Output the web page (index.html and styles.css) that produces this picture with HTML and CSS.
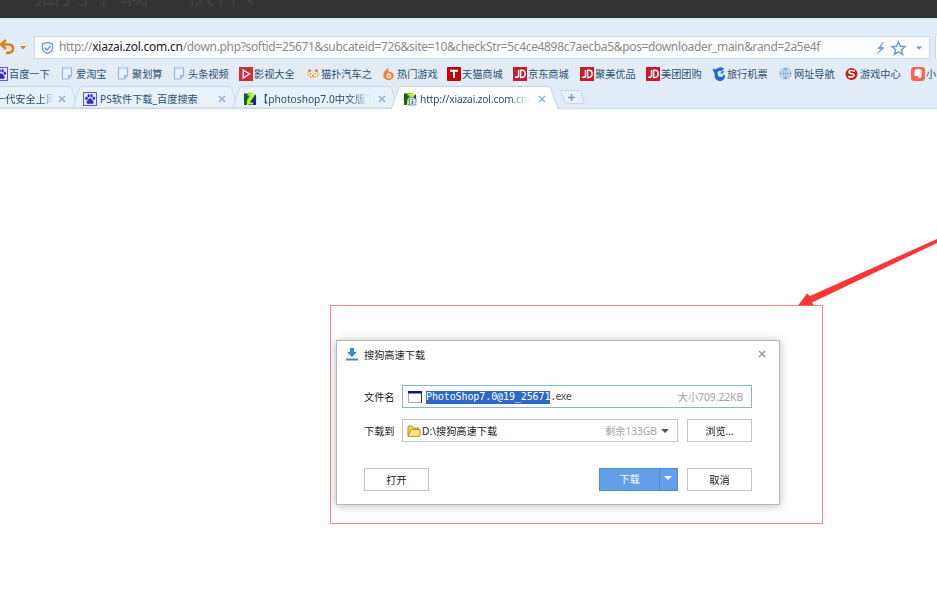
FILE: index.html
```html
<!DOCTYPE html>
<html lang="zh-CN">
<head>
<meta charset="utf-8">
<title>搜狗高速下载</title>
<link rel="stylesheet" href="styles.css">
</head>
<body>
<svg class="defs" width="0" height="0" aria-hidden="true">
  <symbol id="page" viewBox="0 0 14 14"><path d="M1.500 1h9v7.500l-3 3.500h-6zM10.500 8.500h-3v3" fill="#e9f3fd" stroke="#93b8e6" stroke-width="1.200"/></symbol>
  <symbol id="paw" viewBox="0 0 14 14"><rect x=".6" y=".6" width="12.800" height="12.800" fill="#f4f4ff" stroke="#4a48df" stroke-width="1"/><g fill="#2c2ad8"><ellipse cx="3.500" cy="6.300" rx="1.300" ry="1.700"/><ellipse cx="5.700" cy="3.700" rx="1.200" ry="1.700"/><ellipse cx="8.600" cy="3.700" rx="1.200" ry="1.700"/><ellipse cx="10.800" cy="6.300" rx="1.300" ry="1.700"/><path d="M7.100 6.300c1.500 0 2 1.700 3.200 2.800 1 1.200.3 2.900-1.300 2.800-1.300-.2-2.500-.2-3.800 0-1.600.1-2.300-1.600-1.300-2.800C5.100 8 5.600 6.300 7.100 6.300z"/></g></symbol>
  <symbol id="jd" viewBox="0 0 14 14"><rect width="14" height="14" fill="#c71a2c"/><path d="M5.500 3v6q0 1.700-3.500 1.200M7.600 3.200v7.200h1.200q3.300 0 3.300-3.600T8.800 3.200z" fill="none" stroke="#fff" stroke-width="1.500"/></symbol>
  <symbol id="zol" viewBox="0 0 14 14"><circle cx="7" cy="7" r="6.500" fill="#9be321"/><path d="M1 1.500h7L4 8v5H1z" fill="#165d35"/><path d="M13 2v11H5l5-7z" fill="#152b8c"/><path d="M4.500 2.500h5.500L5 11.500h5" fill="none" stroke="#c8f432" stroke-width="1.800"/></symbol>
  <symbol id="close" viewBox="0 0 8 8"><path d="M1 1l6 6M7 1L1 7" stroke="currentColor" stroke-width="1.500"/></symbol>
</svg>

<header class="page-top"><span>猫狗下载</span><span>快件<em>、</em></span></header>

<div class="browser">
  <div class="toolbar">
    <svg class="undo" viewBox="0 0 28 18"><path d="M6 1L1 5.500 6 10M2 5.500h6q5 0 5 4t-5 4.500H6" fill="none" stroke="#dc8113" stroke-width="2.600"/><path d="M20 7h6l-3 3.500z" fill="#dc8113"/></svg>
    <div class="address">
      <svg class="shield" viewBox="0 0 14 14"><path d="M7 1l5.500 1.500v4.500c0 3-2.500 5-5.500 6-3-1-5.500-3-5.500-6V2.500z" fill="#e9f1fa" stroke="#7699c2" stroke-width="1.300"/><path d="M4 6.800l2.300 2.300 4-4.300" fill="none" stroke="#7699c2" stroke-width="1.500"/></svg>
      <span class="url">http://<b>xiazai.zol.com.cn</b>/down.php?softid=25671&amp;subcateid=726&amp;site=10&amp;checkStr=5c4ce4898c7aecba5&amp;pos=downloader_main&amp;rand=2a5e4f</span>
      <svg class="address-tools" viewBox="0 0 52 16"><path d="M8.500 2L3 8.500l3.500.3L2 14l7-6.200-3.600-.4z" fill="#7899c9" stroke="#7899c9" stroke-width=".8"/><path d="M23.500 2l1.800 4.300 4.700.4-3.600 3 1.200 4.600-4.100-2.500-4.100 2.500 1.200-4.600-3.600-3 4.700-.4z" fill="none" stroke="#7899c9" stroke-width="1.500"/><path d="M41 6.500h6l-3 3.300z" fill="#7899c9"/></svg>
    </div>
    <div class="search-edge"></div>
  </div>

  <nav class="bookmarks">
    <span class="bookmark"><svg><use href="#paw"/></svg>百度一下</span>
    <span class="bookmark"><svg><use href="#page"/></svg>爱淘宝</span>
    <span class="bookmark"><svg><use href="#page"/></svg>聚划算</span>
    <span class="bookmark"><svg><use href="#page"/></svg>头条视频</span>
    <span class="bookmark"><svg viewBox="0 0 14 14"><rect width="14" height="14" fill="#ca2f3b"/><path d="M4.200 3l6.300 4-6.300 4z" fill="none" stroke="#fff" stroke-width="1.300"/></svg>影视大全</span>
    <span class="bookmark"><svg viewBox="0 0 14 14"><path d="M3.200 2L6 4h2l2.800-2 1.500 4H1.700z" fill="#df5647"/><ellipse cx="7" cy="7.300" rx="5.800" ry="3.600" fill="#f3bd50"/><ellipse cx="7" cy="6.800" rx="4.600" ry="2.600" fill="#fff6d8"/><path d="M4 6.500h1.200M8.800 6.500H10" stroke="#a5553e"/><path d="M6 8.700h2" stroke="#e0483c"/></svg>猫扑汽车之</span>
    <span class="bookmark"><svg viewBox="0 0 14 14"><path d="M6.500.5C3 3 1 6 1.300 9c.5 5.500 10 5.500 10.400 0 .2-2.500-1.700-4-3.500-4C6.500 5 5.500 3 6.500.5z" fill="#f37f3d"/><path d="M7.500 6.500C4 7.500 5 11 7.500 10.500 9.500 10 9 7.500 7.500 8" fill="none" stroke="#fff1dd" stroke-width="1.400"/></svg>热门游戏</span>
    <span class="bookmark"><svg viewBox="0 0 14 14"><rect width="14" height="14" rx="1" fill="#c40404"/><path d="M3 3.700h8M7 3v8" stroke="#fff" stroke-width="2"/></svg>天猫商城</span>
    <span class="bookmark"><svg><use href="#jd"/></svg>京东商城</span>
    <span class="bookmark"><svg><use href="#jd"/></svg>聚美优品</span>
    <span class="bookmark"><svg><use href="#jd"/></svg>美团团购</span>
    <span class="bookmark"><svg viewBox="0 0 14 14"><path d="M.5 1.500q2 1 4 .5Q8-1 12 1.200L10 4Q5.500 3 5.500 6.500T9 10q2 0 2.700-2.500l1.300.5q0 6-5.500 6Q2 13.500 2.500 6 1 5 .5 1.500z" fill="#1e68dc"/><path d="M8 5.500l3-2 1.500 1-2.500 3z" fill="#3b91ed"/></svg>旅行机票</span>
    <span class="bookmark"><svg viewBox="0 0 14 14"><circle cx="6.500" cy="6.500" r="5.400" fill="#dceafa" stroke="#83a8da"/><path d="M1 6.500h11M6.500 1v11M6.500 1Q1.500 6.500 6.500 12 11.500 6.500 6.500 1" fill="none" stroke="#83a8da" stroke-width=".9"/></svg>网址导航</span>
    <span class="bookmark"><svg viewBox="0 0 14 14"><circle cx="6.500" cy="7" r="6" fill="#c62015"/><path d="M10 4Q4 2.500 4 5.300C4 7.500 9.500 6 9 8.700 8.600 10.500 5 10.200 3.200 9.500" fill="none" stroke="#fff" stroke-width="1.600"/></svg>游戏中心</span>
    <span class="bookmark"><svg viewBox="0 0 14 14"><rect width="14" height="14" rx="3" fill="#fa6650"/><path d="M3.500 5q0-3 3.500-3t3.500 2v6.500L8 11.500 7 9H3.500z" fill="#fff"/></svg>小</span>
  </nav>

  <div class="tabs">
    <svg class="tab-shapes" viewBox="0 0 937 23"><g stroke="#c4d8eb" fill="#e9f1fa"><path d="M-5 22V.5H68q3 0 4 3l6 18.500z"/><path d="M73 22l6-18.500q1-3 4-3H228q3 0 4 3l6 18.500z"/><path d="M233 22l6-18.500q1-3 4-3H388q3 0 4 3l6 18.500z"/><path d="M563 4.500h15q2 0 3 2l3 9q1 2-2 2h-14q-2 0-3-2l-4-9q-1-2 2-2z"/><path d="M0 22.500H937"/><path d="M391 23l7-19.500q1-3 4-3H547q3 0 4 3L558 23z" fill="#fff"/></g><path d="M392 22.500H557" stroke="#fff"/><path d="M568 11.500h7M571.500 8v7" stroke="#7899c5" stroke-width="1.500"/></svg>
    <div class="tab tab-cut"><span class="fade">一代安全上网</span><svg class="x"><use href="#close"/></svg></div>
    <div class="tab"><svg class="favicon"><use href="#paw"/></svg><span class="title-two">PS软件下载_百度搜索</span><svg class="x"><use href="#close"/></svg></div>
    <div class="tab"><svg class="favicon"><use href="#zol"/></svg><span class="fade title-three">【photoshop7.0中文版下</span><svg class="x"><use href="#close"/></svg></div>
    <div class="tab"><svg class="favicon" viewBox="0 0 14 14"><use href="#zol"/><path d="M6.500 5.500h4.500l2 2V13H6.500z" fill="#dbe8fa" stroke="#4a7dc0" stroke-width=".7"/><path d="M9.500 7v1M9.500 9v3" stroke="#2f67c4" stroke-width="1.300"/></svg><span class="fade title-four">http://xiazai.zol.com.cn/</span><svg class="x"><use href="#close"/></svg></div>
  </div>
</div>

<main class="viewport">
  <section class="highlight">
    <div class="dialog">
      <div class="dialog-head">
        <svg class="download" viewBox="0 0 12 13"><path d="M4 0h4v4h3L6 9 1 4h3zM0 10.500h12v2H0z" fill="#398bc9"/></svg>
        <span>搜狗高速下载</span>
        <svg class="dismiss" viewBox="0 0 8 8"><use href="#close"/></svg>
      </div>
      <div class="form">
        <label>文件名</label>
        <div class="field filename">
          <svg class="window" viewBox="0 0 14 12"><path d="M.5.500h13v11H.5z" fill="#fff" stroke="#aaa"/><path d="M0 0h14v2.500H0z" fill="#0a168b"/><path d="M13.500 2v10" stroke="#333"/></svg>
          <span class="name"><mark>PhotoShop7.0@19_25671</mark><span class="ext">.exe</span></span><span class="hint">大小709.22KB</span>
        </div>
        <label>下载到</label>
        <div class="target">
          <div class="field folder-field">
            <svg class="folder" viewBox="0 0 14 12"><path d="M1 11V2q0-1 1-1h3l1.500 2H11q1 0 1 1v1" fill="#f5d45e" stroke="#b88918"/><path d="M1 11.300h11q1 0 1-1V5.500q0-1-1-1H4.500q-1 0-1 1z" fill="#ffe784" stroke="#b88918"/></svg>
            <span class="path">D:\搜狗高速下载</span><span class="hint">剩余133GB</span><i class="arrow"></i>
          </div>
          <button>浏览...</button>
        </div>
      </div>
      <div class="actions">
        <button>打开</button>
        <div class="split"><span>下载</span><i class="arrow"></i></div>
        <button>取消</button>
      </div>
    </div>
  </section>
  <svg class="pointer" viewBox="0 0 139 70"><path d="M0 68.500l9-12 3 2.500L139 2v4L14 65.500l2 3z" fill="#fb3636"/></svg>
</main>
</body>
</html>
```

FILE: styles.css
```css
* { box-sizing: border-box; }
body { margin: 0; width: 937px; height: 593px; overflow: hidden; background: #fff; font: 10.2px/14px "Noto Sans", "Noto Sans CJK SC", sans-serif; color: #222; }
svg { display: block; flex: none; }
.defs { position: absolute; }

.page-top { height: 18px; padding-left: 32px; overflow: hidden; display: flex; gap: 38px; background: #333; color: #3f3f3f; font-size: 29px; line-height: 29px; }
.page-top span { margin-top: -22px; }
.page-top em { font-style: normal; color: #344252; }

.browser { height: 91px; padding-top: 18px; background: #e2ecf7; }
.toolbar { display: flex; height: 23px; }
.undo { width: 28px; height: 18px; margin: 3px 6px 0 0; }
.address { width: 896px; height: 23px; display: flex; align-items: center; padding-left: 6px; background: #fcfdfe; border: 1px solid #cbdced; }
.shield { width: 13px; height: 14px; }
.url { width: 780px; margin: -1px 0 0 5px; flex: none; font-size: 12px; letter-spacing: -.345px; color: #8b8b8b; white-space: nowrap; }
.url b { font-weight: 400; color: #222; letter-spacing: -.25px; }
.address-tools { width: 52px; height: 16px; margin-left: 36px; }
.search-edge { margin-left: 5px; width: 2px; background: #fcfdfe; border-left: 1px solid #cbdced; }

.bookmarks { display: grid; grid-template-columns: 67px 56px 56px 66px 67px 76px 65px 66px 67px 66px 66px 67px 66px 66px 50px; margin: 7px 0 0 -6px; height: 16px; color: #2d5271; }
.bookmark { display: flex; align-items: center; gap: 1px; white-space: nowrap; }
.bookmark svg { width: 14px; height: 14px; }

.tabs { position: relative; display: flex; height: 23px; margin-top: 4px; padding-top: 2px; color: #24516f; }
.tab-shapes { position: absolute; left: 0; top: 0; width: 937px; height: 23px; }
.tab { position: relative; display: flex; align-items: center; width: 160px; height: 21px; padding-left: 10px; white-space: nowrap; }
.tab-cut { width: 73px; padding-left: 0; }
.tab-cut .fade { width: 58px; margin-left: -5px; }
.favicon { width: 14px; height: 14px; margin-right: 3px; }
.fade { overflow: hidden; mask-image: linear-gradient(to right, #000 80%, transparent); }
.x { width: 8px; height: 8px; margin-left: auto; margin-right: 7px; color: #91b3d6; }
.title-three { width: 113px; margin-left: -2px; }
.title-four { width: 111px; letter-spacing: -.15px; }

.viewport { position: relative; height: 484px; padding: 196px 0 0 330px; }
.highlight { width: 493px; height: 219px; padding: 34px 0 0 5px; border: 1px solid #ff8585; }
.dialog { width: 444px; height: 165px; padding: 6px 27px 0 9px; background: #fff; border: 1px solid #b7b7b7; box-shadow: 0 1px 9px #0004; }
.dialog-head { display: flex; align-items: center; height: 15px; gap: 6px; }
.download { width: 12px; height: 13px; }
.dismiss { width: 8px; height: 8px; margin: -2px -14px 0 auto; color: #999; }
.form { display: grid; grid-template-columns: 38px 350px; row-gap: 11px; margin: 23px 0 0 18px; align-items: center; }
.field { display: flex; align-items: center; height: 23px; padding-left: 5px; border: 1px solid #c5c5c5; white-space: nowrap; }
.filename { border-color: #83b2ec; padding-right: 8px; }
.window { width: 14px; height: 12px; margin-right: 4px; }
.name { font-family: "DejaVu Sans Mono", monospace; font-size: 10px; letter-spacing: -.1px; color: #444; }
.ext { letter-spacing: -.9px; }
mark { display: inline-block; height: 13px; line-height: 12px; background: #2f67c4; color: #fff; }
.hint { margin-left: auto; color: #a2a2a2; }
.target { display: flex; gap: 9px; }
.folder-field { width: 276px; padding: 0 8px 0 4px; }
.folder { width: 14px; height: 12px; margin-right: 1px; }
.arrow { border: 4px solid transparent; border-top-color: #555; border-bottom: 0; margin-left: 4px; }
button { width: 65px; height: 23px; padding: 0; border: 1px solid #c5c5c5; background: #fff; font: inherit; color: #222; }
.actions { display: flex; margin: 26px 0 0 18px; }
.split { display: flex; align-items: center; width: 79px; height: 23px; margin: 0 9px 0 170px; border: 1px solid #4f8cd6; background: #619fe8; color: #fff; }
.split span { width: 60px; height: 21px; line-height: 21px; margin-right: 4px; text-align: center; border-right: 1px solid #4f8cd6; }
.split .arrow { margin: -3px 0 0; border-top-color: #fff; }
.pointer { position: absolute; left: 798px; top: 128px; width: 139px; height: 70px; }
```
